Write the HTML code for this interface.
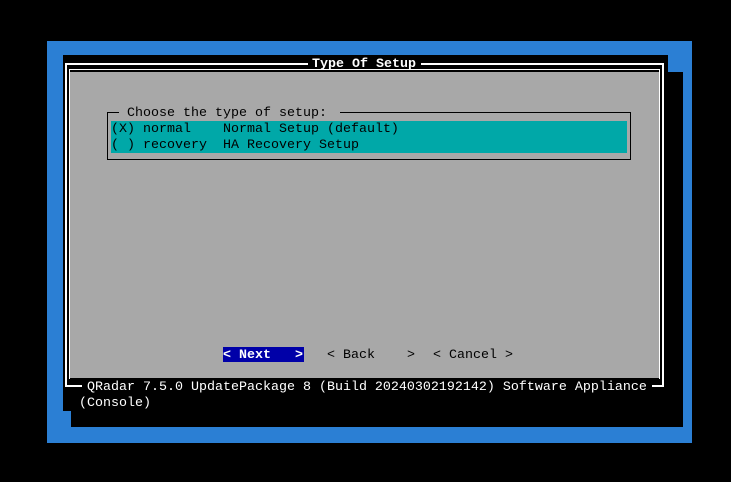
<!DOCTYPE html>
<html><head><style>
html,body{margin:0;padding:0;background:#000;width:731px;height:482px;overflow:hidden;position:relative}
div{position:absolute}
.t{position:absolute;font-family:"Liberation Mono",monospace;font-size:13.33px;line-height:16px;white-space:pre;font-weight:bold}
.w{background:#fff}
</style></head><body>
<div style="left:47px;top:41px;width:645px;height:402px;background:#2b7fd4"></div>
<div style="left:63px;top:55px;width:605px;height:356px;background:#000"></div>
<div style="left:71px;top:72px;width:612px;height:355px;background:#000"></div>
<div style="left:70px;top:72px;width:590px;height:306px;background:#a8a8a8"></div>
<div class="w" style="left:65px;top:63px;width:2px;height:324px"></div>
<div class="w" style="left:662px;top:63px;width:2px;height:324px"></div>
<div class="w" style="left:65px;top:63px;width:243px;height:2px"></div>
<div class="w" style="left:421px;top:63px;width:243px;height:2px"></div>
<div class="w" style="left:65px;top:385px;width:17px;height:2px"></div>
<div class="w" style="left:652px;top:385px;width:12px;height:2px"></div>
<div class="w" style="left:69px;top:69px;width:591px;height:1px"></div>
<div class="w" style="left:69px;top:69px;width:1px;height:310px"></div>
<div class="w" style="left:659px;top:69px;width:1px;height:310px"></div>
<span class="t" style="left:312px;top:57px;color:#fff">Type Of Setup</span>
<div style="left:107px;top:112px;width:524px;height:48px;border:1px solid #000;box-sizing:border-box;border-top:none"></div>
<div style="left:107px;top:112px;width:12px;height:1px;background:#000"></div>
<div style="left:340px;top:112px;width:291px;height:1px;background:#000"></div>
<span class="t" style="left:127px;top:106px;color:#000;font-weight:normal">Choose the type of setup:</span>
<div style="left:111px;top:121px;width:516px;height:32px;background:#00a8a8"></div>
<span class="t" style="left:111px;top:122px;color:#000;font-weight:normal">(X) normal    Normal Setup (default)</span>
<span class="t" style="left:111px;top:138px;color:#000;font-weight:normal">( ) recovery  HA Recovery Setup</span>
<div style="left:223px;top:347px;width:81px;height:15px;background:#0000a8"></div>
<span class="t" style="left:223px;top:348px;color:#fff">&lt; Next   &gt;</span>
<span class="t" style="left:327px;top:348px;color:#000;font-weight:normal">&lt; Back    &gt;</span>
<span class="t" style="left:433px;top:348px;color:#000;font-weight:normal">&lt; Cancel &gt;</span>
<span class="t" style="left:87px;top:380px;color:#fff;font-weight:normal">QRadar 7.5.0 UpdatePackage 8 (Build 20240302192142) Software Appliance</span>
<span class="t" style="left:79px;top:396px;color:#fff;font-weight:normal">(Console)</span>
</body></html>
